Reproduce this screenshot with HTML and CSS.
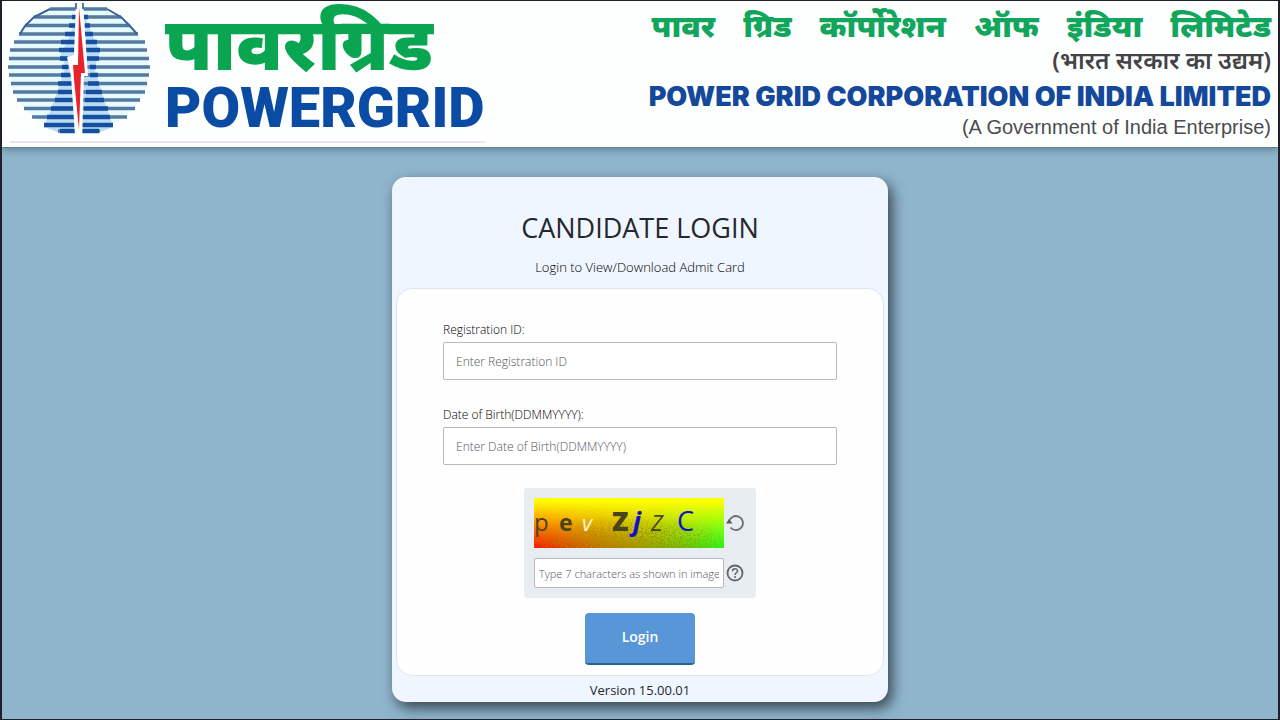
FILE: index.html
```html
<!DOCTYPE html>
<html lang="en">
<head>
    <meta charset="UTF-8">
    <meta name="viewport" content="width=device-width, initial-scale=1.0">
    <title>Candidate Login</title>
    <link rel="stylesheet" href="styles.css">
</head>
<body>
    <header class="header">
        <div class="brand">
            <svg class="brand-logo" viewBox="7 2 144 134" aria-hidden="true">
                <ellipse cx="79" cy="69" rx="70" ry="63" fill="#e6fbfd"/>
                <path d="M76 18 68 40 60 56 66 66 58 90 44 127 60 133H98L113 127 101 90 94 68 100 52 92 34 84 14z" fill="#bcdcf6"/>
                <path d="M50 9H107M34 17H121M25 25.500H130M19 34H138M14 42H145M10 50H147M9 58.500H149M8 67H150M9 75H149M11 83.500H147M13 92H145M17 100H140M24 108.500H135M32 117H127M44 125H113M58 131H100" stroke="#56799f" stroke-width="3.500"/>
                <path d="M50 9 34 17 25 26 20 34M107 9 121 17 130 26 137 34" fill="none" stroke="#37639c" stroke-width="2"/>
                <path d="M72 17H77M69 25.500H76M65 34H76M61 42H75M59 50H74M60 58.500H68M62 67H68M61 75H70M58 83.500H72M58 92H73M55 100H73M51 108.500H74M47 117H74M44 125H74M60 131H75M84 17H88M85 25.500H90M85 34H93M86 42H97M86 50H100M87 58.500H99M90 67H96M90 75H98M88 83.500H99M86 92H102M85 100H104M84 108.500H108M83 117H110M83 125H113M83 131H99" stroke="#1550a0" stroke-width="4.500"/>
                <path d="M76 3H83L87 62 88 76H84L82 135H75L71 76 67 57 74 55z" fill="#fff"/>
                <path d="M76 3V9M83 3V9" stroke="#56799f" stroke-width="2"/>
                <path d="M79 7 84 62 85 73H81L79 130 74 79 73 65H78z" fill="#e9232b"/>
            </svg>
            <div class="brand-text">
                <div class="brand-hindi" lang="hi">पावरग्रिड</div>
                <div class="brand-english">POWERGRID</div>
            </div>
        </div>
        <div class="company">
            <div class="company-hindi" lang="hi">
                <span>पावर</span>
                <span>ग्रिड</span>
                <span>कॉर्पोरेशन</span>
                <span>ऑफ</span>
                <span>इंडिया</span>
                <span>लिमिटेड</span>
            </div>
            <div class="company-hindi-note" lang="hi">(भारत सरकार का उद्यम)</div>
            <div class="company-english">POWER GRID CORPORATION OF INDIA LIMITED</div>
            <div class="company-note">(A Government of India Enterprise)</div>
        </div>
    </header>

    <main class="card">
        <h1>CANDIDATE LOGIN</h1>
        <p class="subtitle">Login to View/Download Admit Card</p>
        <form class="panel">
            <label for="registration-id">Registration ID:</label>
            <input class="field" type="text" id="registration-id" placeholder="Enter Registration ID">

            <label for="birth-date">Date of Birth(DDMMYYYY):</label>
            <input class="field" type="text" id="birth-date" placeholder="Enter Date of Birth(DDMMYYYY)">

            <div class="captcha">
                <svg class="captcha-image" viewBox="0 0 190 50" role="img" aria-label="Captcha">
                    <defs>
                        <linearGradient id="base">
                            <stop offset="0" stop-color="#f10"/>
                            <stop offset="0.5" stop-color="#b08c00"/>
                            <stop offset="1" stop-color="#1cff1c"/>
                        </linearGradient>
                        <linearGradient id="top" x2="0" y2="1">
                            <stop offset="0.05" stop-color="#ff0"/>
                            <stop offset="1" stop-color="#ff0" stop-opacity="0"/>
                        </linearGradient>
                        <radialGradient id="fade" cx="0.5" cy="0.95" r="0.6">
                            <stop offset="0.3" stop-color="#fff"/>
                            <stop offset="1" stop-color="#000"/>
                        </radialGradient>
                        <mask id="speckle"><rect width="190" height="50" fill="url(#fade)"/></mask>
                        <filter id="noise" x="0" y="0" width="1" height="1">
                            <feTurbulence type="fractalNoise" baseFrequency="0.6" numOctaves="2" seed="4"/>
                            <feColorMatrix values="0 0 0 0 0.35  0 0 0 0 0.3  0 0 0 0 0  8 0 0 0 -3.8"/>
                        </filter>
                    </defs>
                    <rect width="190" height="50" fill="url(#base)"/>
                    <rect width="190" height="50" fill="url(#top)"/>
                    <g mask="url(#speckle)"><rect width="190" height="50" filter="url(#noise)"/></g>
                    <g fill="#4a4517">
                        <text x="0" y="33" font-size="24">p</text>
                        <text x="25" y="33" font-size="23" font-weight="bold">e</text>
                        <text x="48" y="33" font-size="22" font-style="italic" fill="#fff3d0">v</text>
                        <text x="78" y="33" font-size="27" font-weight="800">Z</text>
                        <text x="99" y="33" font-size="27" font-weight="bold" font-style="italic" fill="#1010c8">j</text>
                        <text x="117" y="33" font-size="22" font-style="italic">Z</text>
                        <text x="143" y="33" font-size="27" fill="#1010c8">C</text>
                    </g>
                </svg>
                <button class="icon-button" type="button" aria-label="Reload captcha">
                    <svg viewBox="0 0 18 18">
                        <path d="M4.500 13.500A7 7 0 1 0 3 8" fill="none" stroke="#6b6f75" stroke-width="1.800"/>
                        <path d="M0 9.500H6.500L3 5z" fill="#5a5e64"/>
                    </svg>
                </button>
                <input class="captcha-input" type="text" aria-label="Captcha text" placeholder="Type 7 characters as shown in image">
                <button class="icon-button" type="button" aria-label="Help">
                    <svg viewBox="0 0 18 18">
                        <circle cx="9" cy="9" r="7.500" fill="none" stroke="#62666c" stroke-width="1.800"/>
                        <path d="M6.500 7.200C6.500 3.900 11.500 3.900 11.500 7 11.500 8.800 9 8.800 9 11" fill="none" stroke="#62666c" stroke-width="1.500"/>
                        <circle cx="9" cy="13" r="1" fill="#62666c"/>
                    </svg>
                </button>
            </div>

            <button class="login-button" type="submit">Login</button>
        </form>
        <div class="version">Version 15.00.01</div>
    </main>
</body>
</html>
```
FILE: styles.css
```css
* {
    box-sizing: border-box;
}
body {
    margin: 0;
    min-height: 100vh;
    border: 1px solid #20202a;
    border-width: 1px 2px;
    background-color: #8fb5cd;
    font-family: "Open Sans", "Noto Sans", sans-serif;
    color: #25282d;
}
.header {
    display: flex;
    justify-content: space-between;
    background: #fdfefe;
    border-bottom: 1px solid #67828f;
    box-shadow: 0 2px 8px rgba(50, 80, 100, 0.5);
}
.brand {
    display: flex;
    gap: 14px;
    height: 142px;
    margin-left: 8px;
    margin-bottom: 4px;
    padding-top: 1px;
    border-bottom: 2px solid #eee2ec;
}
.brand-logo {
    width: 144px;
    height: 134px;
    margin-left: -3px;
}
.brand-text {
    white-space: nowrap;
}
.brand-hindi {
    color: #0aa550;
    font: 900 74px/80px "Noto Sans", "Noto Sans Devanagari", sans-serif;
}
.brand-english {
    color: #0a4ca3;
    font: 900 56px/52px Roboto, "Liberation Sans", sans-serif;
}
.company {
    padding: 4px 7px 0 0;
    text-align: right;
    white-space: nowrap;
}
.company-hindi {
    display: flex;
    justify-content: flex-end;
    gap: 28px;
    height: 40px;
    color: #12a65c;
    font: 900 31px/40px "Noto Sans", "Noto Sans Devanagari", sans-serif;
}
.company-hindi-note {
    height: 32px;
    color: #444446;
    font: 600 24px/30px "Noto Sans", "Noto Sans Devanagari", sans-serif;
}
.company-english {
    color: #14489b;
    font: 900 27px/40px Inter, "Liberation Sans", sans-serif;
}
.company-note {
    color: #4c4c50;
    font: 20px/20px "Liberation Sans", Arial, sans-serif;
}
.card {
    max-width: 496px;
    margin: 29px auto 16px;
    padding: 32px 4px 0;
    border-radius: 14px;
    background: #eff6ff;
    box-shadow: 4px 6px 14px rgba(30, 40, 45, 0.8);
    text-align: center;
}
h1 {
    margin: 0;
    font-size: 27px;
    font-weight: 500;
    line-height: 38px;
}
.subtitle {
    margin: 8px 0 9px;
    color: #000;
    font-size: 13px;
    font-weight: 300;
    line-height: 24px;
}
.panel {
    padding: 28px 46px 10px;
    border: 1px solid #dde5ec;
    border-radius: 16px;
    background: #fefefe;
}
label {
    display: block;
    color: #000;
    font-size: 12px;
    font-weight: 300;
    line-height: 25px;
    text-align: left;
}
input {
    font-family: inherit;
    font-weight: 300;
    border: 1px solid #b8b8bd;
    border-radius: 2px;
    background: #fff;
}
input::placeholder {
    color: #55555a;
}
.field {
    display: block;
    width: 100%;
    height: 38px;
    margin-bottom: 22px;
    padding: 0 12px;
    font-size: 12px;
}
.captcha {
    display: inline-grid;
    grid-template-columns: 190px 18px;
    gap: 10px 2px;
    align-items: center;
    margin-top: 1px;
    padding: 10px 12px 10px 10px;
    border-radius: 3px;
    background: #e7edf0;
}
.captcha-image {
    width: 190px;
    height: 50px;
}
.captcha-input {
    width: 100%;
    height: 30px;
    padding: 0 4px;
    font-size: 11px;
}
.icon-button {
    width: 18px;
    height: 18px;
    padding: 0;
    border: none;
    background: none;
    cursor: pointer;
}
.icon-button svg {
    display: block;
}
.login-button {
    display: block;
    width: 110px;
    height: 52px;
    margin: 15px auto 0;
    padding: 0 0 4px;
    border: none;
    border-bottom: 2px solid #286294;
    border-radius: 4px;
    background: #5896d8;
    color: #fff;
    font: 600 14px "Open Sans", sans-serif;
    cursor: pointer;
}
.version {
    padding-top: 3px;
    font-size: 13px;
    line-height: 23px;
}
```
